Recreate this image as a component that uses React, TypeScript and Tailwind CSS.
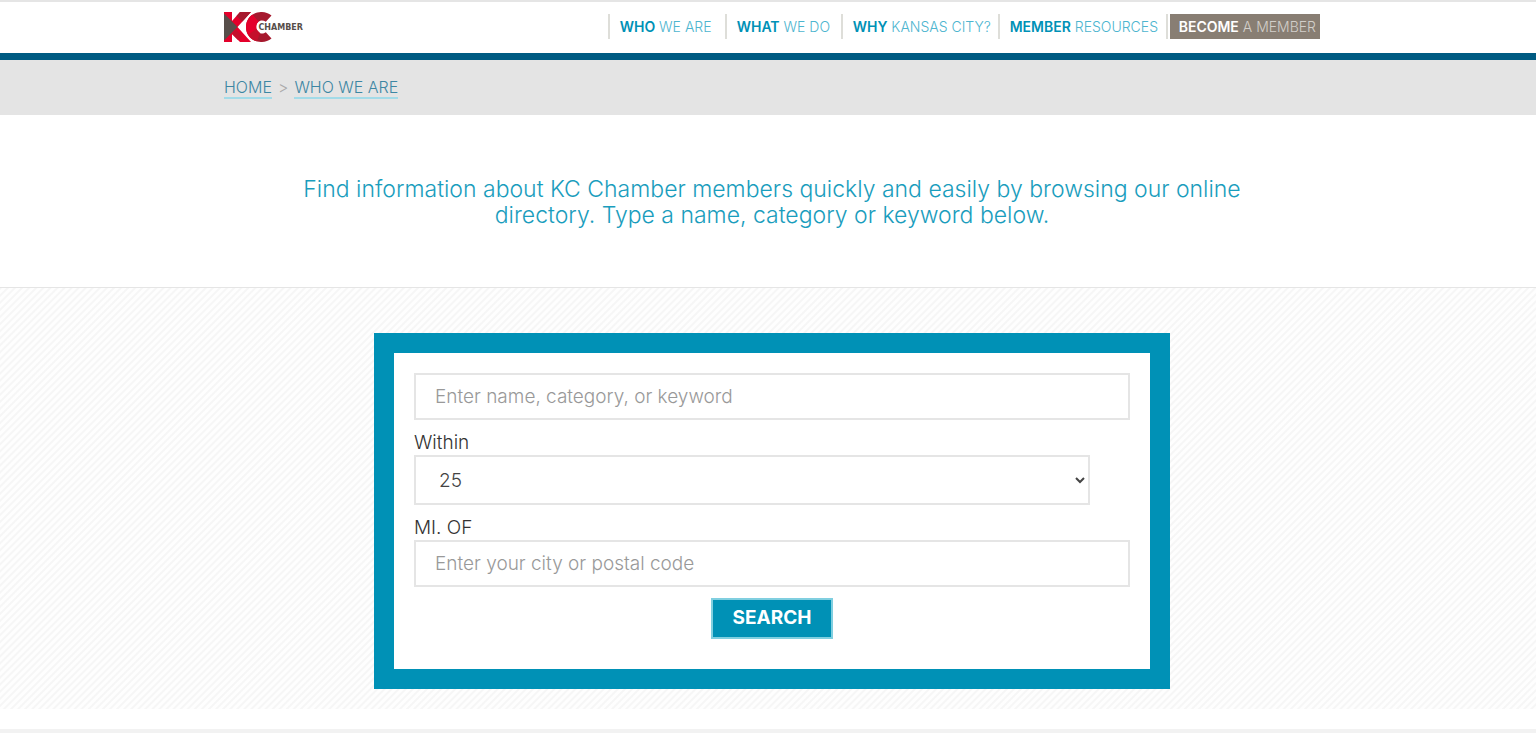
const navItems = [
  { strong: 'WHO', rest: 'WE ARE', width: 'min-w-[117px]' },
  { strong: 'WHAT', rest: 'WE DO', width: 'min-w-[116px]' },
  { strong: 'WHY', rest: 'KANSAS CITY?', width: 'min-w-[157px]' },
  { strong: 'MEMBER', rest: 'RESOURCES', width: 'min-w-[168px]' },
];

const field = 'block w-full border-2 border-[#e5e5e5] bg-white px-[19px] text-[19px] font-light';
const label = 'block pt-[11px] text-[19px] leading-6 font-light text-[#333]';
const crumb = 'border-b-2 border-[#a3dbe8] leading-5 text-[#3d86a3]';

function Logo() {
  return (
    <svg viewBox="0 0 82 30" className="h-[30px] w-[82px]" role="img" aria-label="KC Chamber">
      <path d="M0 0H8V9L16 0H27L13.5 15L27 30H16L8 22V30H0Z" fill="#e4002b" />
      <path d="M16 0H27L18.5 9.5L12.5 4Z" fill="#a6192e" />
      <path d="M8 22L12 17.5L18.5 24.5L14 28Z" fill="#c4102c" />
      <path d="M0 1.5L13.5 15L0 28.5Z" fill="#574e4a" />
      <path d="M47.5 3.4L41.8 9.8C38 6.8 32.2 9 32.2 15S38 23.2 41.8 20.2L47.5 26.6C38 34 22 29 22 15S38 -4 47.5 3.4Z" fill="#a6192e" />
      <path d="M22 15C22 9.5 24.7 5 28.5 2.5L34.6 9.7C31.4 12 31.4 18 34.6 20.3L31 28.7C25.7 26.5 22 21.8 22 15Z" fill="#e4002b" />
      <path d="M24.5 22.5L32.3 17L36 21L33 29.3C29.5 28.3 26.4 25.8 24.5 22.5Z" fill="#c4102c" />
      <text x="34.5" y="17.9" fontSize="8" fontWeight="700" fill="#574e4a" className="font-['DejaVu_Sans',sans-serif]">CHAMBER</text>
    </svg>
  );
}

export default function App() {
  return (
    <div className="bg-white font-[Inter,sans-serif] text-[#333]">
      <header className="border-t-2 border-b-[7px] border-t-[#e5e5e5] border-b-[#005b82] pl-2">
        <div className="mx-auto flex h-[51px] max-w-[1096px] items-start justify-between">
          <a href="#home" className="mt-[10px]"><Logo /></a>
          <nav className="mt-3">
            <ul className="flex text-sm leading-[25px] font-light whitespace-nowrap text-[#4db5cf]">
              {navItems.map((item) => (
                <li key={item.strong} className={`border-l-2 border-[#deded9] pl-[10px] ${item.width}`}>
                  <a href="#nav">
                    <strong className="font-semibold text-[#0091b6]">{item.strong}</strong> {item.rest}
                  </a>
                </li>
              ))}
              <li className="border-l-2 border-[#deded9] pl-[2px]">
                <a href="#join" className="block min-w-[150px] bg-[#887e73] pr-1 pl-[9px] leading-[25px] text-[#d3cfca]">
                  <strong className="font-semibold text-white">BECOME</strong> A MEMBER
                </a>
              </li>
            </ul>
          </nav>
        </div>
      </header>

      <nav aria-label="Breadcrumb" className="bg-[#e4e4e4] pl-2">
        <div className="mx-auto flex h-[55px] max-w-[1096px] items-start gap-[6px] pt-[17px] text-base leading-5 font-light">
          <a href="#home" className={crumb}>HOME</a>
          <span className="text-[#aaa]">&gt;</span>
          <a href="#who" className={crumb}>WHO WE ARE</a>
        </div>
      </nav>

      <main>
        <section className="border-b border-[#e5e5e5] pt-[61px] pb-[59px] pl-2">
          <p className="mx-auto max-w-[996px] text-center text-[23px] leading-[26px] font-light text-[#1a9dbd]">
            Find information about KC Chamber members quickly and easily by browsing our online directory. Type a name, category or keyword below.
          </p>
        </section>

        <section className="bg-[repeating-linear-gradient(135deg,#f6f6f6_0px,#f6f6f6_1px,#fefefe_2px,#fefefe_4px,#f6f6f6_5px)] pt-[45px] pb-5 pl-2">
          <form className="mx-auto max-w-[796px] border-[20px] border-[#0091b6] bg-white px-5 pt-5 pb-[30px]">
            <input aria-label="Name, category, or keyword" placeholder="Enter name, category, or keyword" className={`${field} h-[47px] placeholder:text-[#999]`} />
            <label htmlFor="distance" className={label}>Within</label>
            <div className="pr-10">
              <select id="distance" className={`${field} h-[50px] text-[#444]`}>
                <option>25</option>
              </select>
            </div>
            <label htmlFor="place" className={label}>MI. OF</label>
            <input id="place" placeholder="Enter your city or postal code" className={`${field} h-[47px] placeholder:text-[#999]`} />
            <button type="button" className="mx-auto mt-[11px] block h-[41px] w-[122px] border-2 border-[#80cfe0] bg-[#0091b6] text-[19px] font-bold text-white">SEARCH</button>
          </form>
        </section>
      </main>
      <footer className="mt-5 h-1 bg-[#f2f2f2]" />
    </div>
  );
}
